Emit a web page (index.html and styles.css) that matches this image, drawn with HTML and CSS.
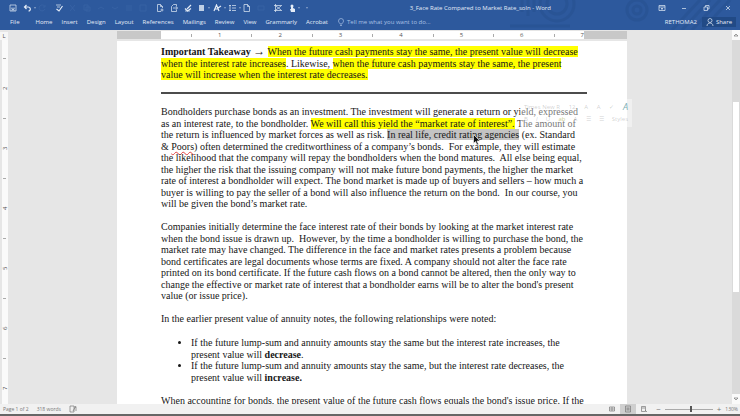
FILE: index.html
```html
<!DOCTYPE html>
<html lang="en">
<head>
<meta charset="utf-8">
<title>3_Face Rate Compared to Market Rate_soln - Word</title>
<link rel="stylesheet" href="styles.css">
</head>
<body>
<div class="app">
  <header class="titlebar">
    <svg class="pattern" viewBox="0 0 240 30" aria-hidden="true">
      <circle cx="57" cy="4" r="17"/><circle cx="57" cy="4" r="10"/>
      <circle cx="137" cy="10" r="10"/><circle cx="137" cy="10" r="4"/>
      <path d="M22 0v12M28 0v16M34 0v12M172 30l28-30M182 30l28-30M192 30l28-30M202 30l28-30M10 26h60"/>
    </svg>
    <div class="toprow">
      <div class="quick">
        <button aria-label="Save"><svg viewBox="0 0 8 8"><path d="M1 1h6v6H1zM2 4.2h4M3 7V5.500h2V7"/></svg></button>
        <button class="wide" aria-label="Undo"><svg viewBox="0 0 14 8"><path class="bold" d="M3.500 1L1.500 3l2 2M1.500 3h3.500c3 0 3 4 .5 4"/><path class="fill" d="M11 3.500h2l-1 1z"/></svg></button>
        <button class="dim" aria-label="Repeat"><svg viewBox="0 0 8 8"><path d="M6.500 2A3 3 0 1 0 7 5M7 1v2H5"/></svg></button>
        <button class="after" aria-label="Spelling"><svg viewBox="0 0 8 8"><path d="M1 1h5M2 3h3"/><path class="bold" d="M1.500 5L4 7l3.500-5"/></svg></button>
        <button class="dim" aria-label="Cut"><svg viewBox="0 0 8 8"><path d="M1 1l5 6M6 1L1 7"/></svg></button>
        <button class="dim" aria-label="Copy"><svg viewBox="0 0 8 8"><path d="M1 1h4v5H1zM3 3h4v4H3z"/></svg></button>
        <button class="dim" aria-label="Paste"><svg viewBox="0 0 8 8"><path d="M1 5l3-2 3 2"/></svg></button>
        <button class="dim" aria-label="Format"><svg viewBox="0 0 8 8"><path d="M1 3l3 2 3-2"/></svg></button>
        <button class="dim" aria-label="Align"><svg viewBox="0 0 8 8"><path d="M1 2h6M1 4h6M1 6h6"/></svg></button>
        <button class="dim" aria-label="Shape"><svg viewBox="0 0 8 8"><path d="M1 1h6v6H1z"/></svg></button>
        <button class="after" aria-label="New document"><svg viewBox="0 0 8 8"><path d="M5 7.500H1.500V.5h3l2 2V4M4.500.5v2h2M4.500 6h3M6 4.500v3"/></svg></button>
        <button aria-label="Export"><svg viewBox="0 0 8 8"><path d="M6.500 5.500v2h-5V2.500l2-2h3v2M3 4h4.500M6 2.500L7.500 4 6 5.500"/></svg></button>
        <button aria-label="Ink"><svg viewBox="0 0 8 8"><path class="bold" d="M7 1L3 5M1 4.500L3.500 7 7 4.500"/><path d="M1 7h5"/></svg></button>
        <button class="wide" aria-label="Table"><svg viewBox="0 0 14 8"><path class="fill" d="M1 1h5v6H1z" opacity=".8"/><path class="fill" d="M10 3.500h2l-1 1z"/></svg></button>
        <button class="wide" aria-label="Font"><svg viewBox="0 0 14 8"><path class="bold" d="M1 7l2.500-6L6 7M2 5h3M5 4l3-2"/><path class="fill" d="M11 3.500h2l-1 1z"/></svg></button>
        <button class="wide" aria-label="Line spacing"><svg viewBox="0 0 14 8"><path d="M4 1.500h4M4 4h4M4 6.500h4M2 1v6M1 2l1-1 1 1M1 6l1 1 1-1"/><path class="fill" d="M11 3.500h2l-1 1z"/></svg></button>
        <button aria-label="Page"><svg viewBox="0 0 8 8"><path d="M1 .5h3.500l2 2v5H1zM4.500.5v2h2"/></svg></button>
        <button class="dim" aria-label="Picture"><svg viewBox="0 0 8 8"><path d="M1 2h6v4H1z"/></svg></button>
        <button class="after" aria-label="Crop"><svg viewBox="0 0 8 8"><path d="M0 1.500h8M0 6.500h8M1.500 0v8M2 6l5-4M2 2l5 4"/></svg></button>
        <button class="wide" aria-label="Touch mode"><svg viewBox="0 0 14 8"><circle class="fill" cx="4" cy="2" r="1.500"/><path class="fill" d="M3 2h2v2l2 1v3H3L2 5h1z"/><path class="fill" d="M10 3.500h2l-1 1z"/></svg></button>
        <button aria-label="Customize"><svg viewBox="0 0 8 8"><path class="fill" d="M3 3.500h2l-1 1z"/></svg></button>
      </div>
      <h1>3_Face Rate Compared to Market Rate_soln - Word</h1>
      <div class="window">
        <button aria-label="Ribbon display options"><svg viewBox="0 0 8 8"><path d="M1 1.500h6v5H1zM1 3h6M4 6V4M3 5l1-1 1 1"/></svg></button>
        <button aria-label="Minimize"><svg viewBox="0 0 8 8"><path d="M2 4.500h4"/></svg></button>
        <button aria-label="Restore"><svg viewBox="0 0 8 8"><path d="M2 3h3.500v3.500H2zM3.500 3V1.500H7V5H5.500"/></svg></button>
        <button aria-label="Close"><svg viewBox="0 0 8 8"><path d="M2 2l4 4M6 2L2 6"/></svg></button>
      </div>
    </div>
    <nav class="tabs">
      <a class="file" href="#file">File</a><a href="#home">Home</a><a href="#insert">Insert</a><a href="#design">Design</a><a href="#layout">Layout</a><a href="#references">References</a><a href="#mailings">Mailings</a><a href="#review">Review</a><a href="#view">View</a><a href="#grammarly">Grammarly</a><a href="#acrobat">Acrobat</a>
      <button class="tell"><svg viewBox="0 0 8 8"><path d="M3 6c0-1-1.500-1.500-1.500-3a2.500 2.500 0 0 1 5 0c0 1.500-1.500 2-1.500 3zM3 7.500h2"/></svg>Tell me what you want to do...</button>
      <span class="user">RETHOMA2</span>
      <button class="share"><svg viewBox="0 0 8 8"><circle cx="4" cy="2.500" r="2"/><path d="M1 8c0-4 6-4 6 0"/></svg>Share</button>
    </nav>
  </header>

  <div class="workspace">
    <div class="corner">L</div>
    <div class="desk ruler-desk">
      <div class="ruler">
        <ol class="inches"><li>1</li><li>2</li><li>3</li><li>4</li><li>5</li><li>6</li><li>7</li></ol>
      </div>
    </div>
    <div class="scroll">
      <button aria-label="Scroll up"><svg viewBox="0 0 8 8"><path d="M2 5l2-2 2 2z"/></svg></button>
      <div class="track"><div class="thumb"></div></div>
      <button aria-label="Scroll down"><svg viewBox="0 0 8 8"><path d="M2 3l2 2 2-2z"/></svg></button>
    </div>
    <ol class="vruler"><li>2</li><li>3</li><li>4</li><li>5</li><li>6</li><li>7</li></ol>
    <main class="desk">
      <article class="page">
        <p><strong>Important Takeaway</strong> <span class="arrow">→</span> <mark>When the future cash payments stay the same, the present value will decrease when the interest rate increases</mark>. Likewise, <mark>when the future cash payments stay the same, the present value will increase when the interest rate decreases.</mark></p>
        <hr>
        <p>Bondholders purchase bonds as an investment. The investment will generate a return or yield, expressed as an interest rate, to the bondholder. <mark>We will call this yield the “market rate of interest”.</mark> The amount of the return is influenced by market forces as well as risk. <span class="selected">In real life, credit rating agencies</span> (ex. Standard &amp; <span class="misspelt">Poors</span>) often determined the creditworthiness of a company’s bonds.&nbsp; For example, they will estimate the likelihood that the company will repay the bondholders when the bond matures.&nbsp; All else being equal, the higher the risk that the issuing company will not make future bond payments, the higher the market rate of interest a bondholder will expect. The bond market is made up of buyers and sellers – how much a buyer is willing to pay the seller of a bond will also influence the return on the bond.&nbsp; In our course, you will be given the bond’s market rate.</p>
        <p>Companies initially determine the face interest rate of their bonds by looking at the market interest rate when the bond issue is drawn up.&nbsp; However, by the time a bondholder is willing to purchase the bond, the market rate may have changed. The difference in the face and market rates presents a problem because bond certificates are legal documents whose terms are fixed. A company should not alter the face rate printed on its bond certificate. If the future cash flows on a bond cannot be altered, then the only way to change the effective or market rate of interest that a bondholder earns will be to alter the bond's present value (or issue price).</p>
        <p>In the earlier present value of annuity notes, the following relationships were noted:</p>
        <ul>
          <li>If the future lump-sum and annuity amounts stay the same but the interest rate increases, the present value will <strong>decrease</strong>.</li>
          <li>If the future lump-sum and annuity amounts stay the same, but the interest rate decreases, the present value will <strong>increase.</strong></li>
        </ul>
        <p>When accounting for bonds, the present value of the future cash flows equals the bond's issue price. If the</p>
        <div class="minibar">
          <div><span>Times New R</span><span>12</span><span>A</span><span>A</span><span>✓</span><span class="styles">A</span></div>
          <div><span>B</span><span><i>I</i></span><span>U</span><span class="pen">ab</span><span>A</span><span>☰</span><span>☰</span><span>Styles</span></div>
        </div>
        <svg class="pointer" viewBox="0 0 8 12" aria-hidden="true"><path d="M.5.5v9l2-2 1.500 3.500 1.500-.7L4 7h3z"/></svg>
      </article>
    </main>
  </div>

  <footer class="status">
    <span>Page 1 of 2</span><span>318 words</span>
    <button aria-label="Proofing"><svg viewBox="0 0 8 8"><path d="M1 1h4v6H1zM5 2h2v4M4 6l3-5"/></svg></button>
    <div class="views">
      <button aria-label="Read mode"><svg viewBox="0 0 8 8"><path d="M1.500 2h5v4h-5zM4 2v4M2 4h4"/></svg></button>
      <button class="current" aria-label="Print layout"><svg viewBox="0 0 8 8"><path d="M1.500 1h5v6h-5zM2.500 3h3M2.500 4h3M2.500 5h3"/></svg></button>
      <button aria-label="Web layout"><svg viewBox="0 0 8 8"><path d="M1.500 1.500h4v5h-4zM2 3h3M5 5l2 2"/></svg></button>
    </div>
    <button class="step" aria-label="Zoom out">−</button>
    <input type="range" min="0" max="100" value="54" aria-label="Zoom">
    <button class="step" aria-label="Zoom in">+</button>
    <span class="percent">130%</span>
  </footer>
</div>
</body>
</html>
```
FILE: styles.css
```css
* { box-sizing: border-box; }

body {
  margin: 0;
  background: #5c5c5c;
  font-family: "Open Sans", "Liberation Sans", sans-serif;
  font-size: 6px;
}

button {
  display: inline-flex;
  align-items: center;
  justify-content: center;
  margin: 0;
  padding: 0;
  border: 0;
  background: none;
  color: inherit;
  font: inherit;
}

ol, ul { margin: 0; padding: 0; }

svg {
  height: 8px;
  fill: none;
  stroke: currentColor;
  stroke-width: .7;
}

svg .bold { stroke-width: 1.200; }
svg .fill { fill: currentColor; stroke: none; }

.app {
  display: flex;
  flex-direction: column;
  height: 100vh;
  border-bottom: 2px solid #666;
}

/* Title bar and ribbon tabs */
.titlebar {
  position: relative;
  flex: none;
  height: 30px;
  background: #2d599d;
  color: #e4ecf7;
}

.pattern {
  position: absolute;
  top: 0;
  right: 0;
  width: 240px;
  height: 30px;
  color: #254d8b;
  opacity: .4;
  stroke-width: 3;
}

.toprow, .tabs {
  position: relative;
  display: grid;
  align-items: center;
  height: 15px;
}

.toprow { grid-template-columns: 13fr auto 6fr; }
.quick, .window { display: flex; align-items: center; }
.quick { padding-left: 9px; }
.quick button { flex: none; width: 8px; margin-right: 6px; }
.quick .wide { width: 14px; margin-right: 1px; }
.quick .after { margin-left: 3px; }
.quick .dim { color: #3b66a8; }

h1 {
  margin: 0;
  font-size: 6px;
  font-weight: 400;
}

.window { justify-content: flex-end; gap: 14px; padding-right: 8px; }

.tabs {
  display: flex;
  gap: 9px;
  padding: 0 4px 2px 10px;
}

.tabs a { color: inherit; text-decoration: none; }
.tabs .file { margin-right: 7px; }
.tell { gap: 2px; color: #a9c0e4; }
.user { margin-left: auto; }

.share {
  gap: 2px;
  height: 10px;
  padding: 0 4px;
  margin-left: -4px;
  background: #214a86;
}

/* Rulers, document and scroll bar */
.workspace {
  display: grid;
  flex: 1;
  grid-template: 10px 1fr / 8px 1fr 8px;
  min-height: 0;
  background: #e6e6e6;
}

.corner {
  margin-top: 2px;
  background: #f6f6f6;
  color: #555;
  line-height: 8px;
  text-align: center;
}

.desk {
  display: flex;
  justify-content: center;
  min-height: 0;
  padding-left: 4px;
  overflow: hidden;
}

.ruler-desk { padding-top: 1px; }

.ruler {
  width: 510px;
  height: 8px;
  padding: 0 43px 0 44px;
  background: #c8c8c8;
}

.inches {
  display: flex;
  background: #fff;
  color: #555;
  line-height: 8px;
  list-style: none;
}

.inches li {
  display: flex;
  flex: 1;
  align-items: center;
  justify-content: flex-end;
}

.inches li::before {
  width: 1px;
  height: 3px;
  margin-right: auto;
  margin-left: 30px;
  background: #aaa;
  content: "";
}

.vruler {
  display: flex;
  flex-direction: column;
  min-height: 0;
  margin-left: 2px;
  overflow: hidden;
  background: #fafafa;
  color: #555;
  line-height: 6px;
  list-style: none;
}

.vruler li {
  display: flex;
  flex: none;
  align-items: flex-end;
  height: 60px;
  background: linear-gradient(#aaa, #aaa) center 31px / 3px 1px no-repeat;
  writing-mode: vertical-rl;
  transform: rotate(180deg);
}

.vruler li:first-child { height: 50px; }

.scroll {
  display: flex;
  grid-row: 1 / 3;
  grid-column: 3;
  flex-direction: column;
  color: #777;
}

.scroll button { height: 10px; background: #fafafa; }
.track { flex: 1; padding: 62px 1px 0; background: #dadada; }
.thumb { height: 190px; background: #fff; }

.page {
  position: relative;
  width: 510px;
  height: 400px;
  margin-top: 1px;
  padding: 5px 43px 0 44px;
  background: #fff;
  color: #161616;
  font-family: "Liberation Serif", serif;
  font-size: 10px;
  line-height: 1.15;
}

.page p { margin: 0 0 1.15em; }

.page hr {
  height: 2px;
  margin: 0 -3px 12px 0;
  border: 0;
  background: #4c4c4c;
}

.page ul { margin: 0 0 1.15em; padding: 1px 0 0 30px; }
.arrow { font-size: 12px; line-height: 0; }
mark { background: #ff0; color: inherit; }
.selected { background: #c3c3c3; }
.misspelt { text-decoration: underline wavy #e04040 1px; }

/* Fading formatting toolbar over the selection */
.minibar {
  position: absolute;
  top: 58px;
  left: 403px;
  width: 112px;
  height: 28px;
  padding: 2px 4px;
  background: rgb(255 255 255 / .4);
  color: rgb(90 90 90 / .3);
  font: 6px/12px "Open Sans", sans-serif;
}

.minibar div { display: flex; justify-content: space-between; }
.minibar .styles { color: rgb(60 140 150 / .7); font-size: 9px; font-style: italic; }
.minibar .pen { color: rgb(150 150 30 / .5); }

.pointer {
  position: absolute;
  top: 93px;
  left: 356px;
  height: 12px;
  fill: #111;
  stroke: #eee;
}

/* Status bar */
.status {
  display: flex;
  flex: none;
  align-items: center;
  gap: 8px;
  height: 10px;
  padding: 0 2px 0 3px;
  background: #f1f1f1;
  color: #777;
  font-size: 5px;
}

.views { display: flex; margin-left: auto; }
.views button { width: 16px; height: 10px; }
.views .current { background: #cfcfcf; }
.status .step { margin: 0 -4px; font-size: 8px; line-height: 8px; }

input[type="range"] {
  width: 48px;
  height: 8px;
  margin: 0;
  background: linear-gradient(#aaa, #aaa) center / 100% 1px no-repeat;
  appearance: none;
}

input[type="range"]::-webkit-slider-thumb {
  width: 2px;
  height: 6px;
  background: #555;
  appearance: none;
}
```
